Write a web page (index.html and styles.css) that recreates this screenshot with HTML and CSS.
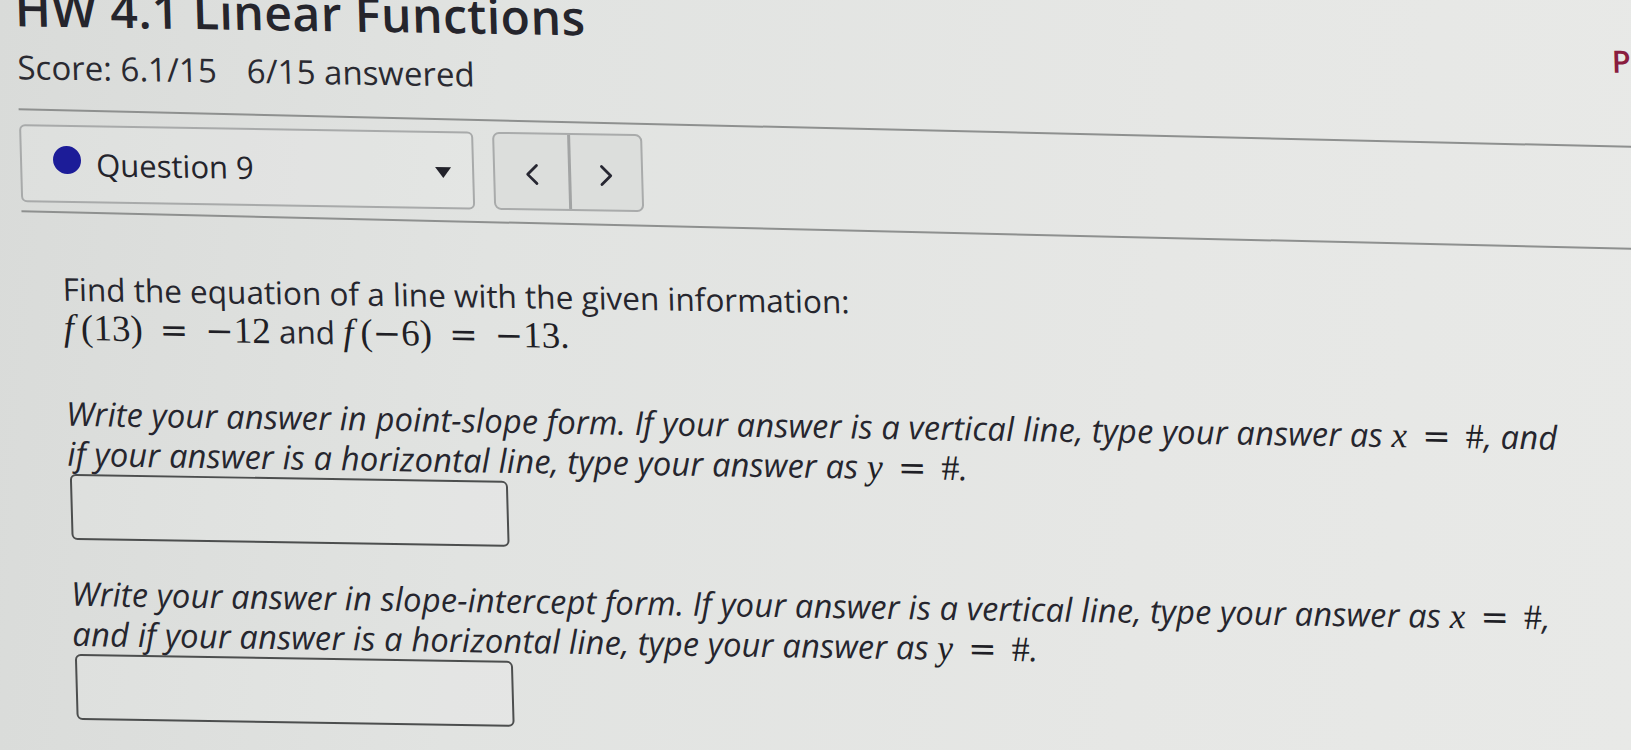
FILE: index.html
```html
<!DOCTYPE html>
<html lang="en">
<head>
<meta charset="utf-8">
<title>HW 4.1 Linear Functions</title>
<link rel="stylesheet" href="styles.css">
</head>
<body>
<div class="page">
  <header class="page-head">
    <div class="head-main">
      <h1 class="title">HW 4.1 Linear Functions</h1>
      <div class="score"><span>Score: 6.1/15</span><span class="answered">6/15 answered</span></div>
    </div>
    <div class="head-side"><span class="points">Points possible: 1</span></div>
  </header>

  <div class="rule"></div>

  <div class="question-row">
    <div class="q-select">
      <span class="status-dot"></span>
      <span class="q-label">Question 9</span>
      <span class="caret"></span>
    </div>
    <div class="qnav">
      <button class="nav-btn prev" aria-label="Previous question">
        <svg width="16" height="24" viewBox="0 0 16 24"><polyline points="12.5,3 3.5,12 12.5,21" fill="none" stroke="#272732" stroke-width="2.8" stroke-linecap="round" stroke-linejoin="round"/></svg>
      </button>
      <button class="nav-btn next" aria-label="Next question">
        <svg width="16" height="24" viewBox="0 0 16 24"><polyline points="3.5,3 12.5,12 3.5,21" fill="none" stroke="#272732" stroke-width="2.8" stroke-linecap="round" stroke-linejoin="round"/></svg>
      </button>
    </div>
  </div>

  <div class="rule"></div>

  <div class="q-body">
    <p class="lead">Find the equation of a line with the given information:<br><span class="m"><i class="fn">f</i>(13)<span class="op rel">=</span><span class="op">−</span>12</span> and <span class="m"><i class="fn">f</i>(<span class="op">−</span>6)<span class="op rel">=</span><span class="op">−</span>13.</span></p>

    <div class="part">
      <p>Write your answer in point-slope form. If your answer is a vertical line, type your answer as <span class="m"><i>x</i><span class="op rel">=</span>#</span>, and if your answer is a horizontal line, type your answer as <span class="m"><i>y</i><span class="op rel">=</span>#</span>.</p>
      <div class="answer"></div>
    </div>

    <div class="part">
      <p>Write your answer in slope-intercept form. If your answer is a vertical line, type your answer as <span class="m"><i>x</i><span class="op rel">=</span>#</span>, and if your answer is a horizontal line, type your answer as <span class="m"><i>y</i><span class="op rel">=</span>#</span>.</p>
      <div class="answer"></div>
    </div>
  </div>
</div>
</body>
</html>
```

FILE: styles.css
```css
html, body {
  margin: 0;
  height: 100%;
  overflow: hidden;
}

body {
  background: linear-gradient(95deg, #d9dbd9 0%, #e1e3e1 30%, #e6e7e5 70%, #e8e9e7 100%);
  font-family: "Open Sans", "Noto Sans", sans-serif;
  color: #26262e;
}

.page {
  width: 1631px;
  box-sizing: border-box;
  padding-left: 15px;
  transform: matrix(1, 0.016, 0.028, 1, 0, 0);
  transform-origin: 0 0;
}

.page-head {
  display: flex;
  margin-top: -20px;
}

.head-main {
  flex: 1;
  min-width: 0;
}

.title {
  margin: 0 0 0 -1px;
  font-size: 48px;
  line-height: 56px;
  font-weight: 600;
  letter-spacing: 0.5px;
  color: #25252c;
}

.score {
  margin-top: 11px;
  font-size: 33px;
  line-height: 40px;
  color: #2a2a31;
}

.score .answered {
  margin-left: 30px;
}

.head-side {
  flex: none;
  width: 21px;
  min-width: 0;
  padding-top: 35px;
  white-space: nowrap;
}

.points {
  font-size: 31px;
  line-height: 40px;
  font-weight: 600;
  color: #8a1d3f;
}

.rule {
  height: 2px;
  background: #8e908f;
  margin-top: 21px;
  transform: skewY(0.42deg);
  transform-origin: 0 0;
}

.question-row {
  display: flex;
  gap: 19px;
  margin-top: 14px;
  margin-bottom: 8px;
}

.question-row + .rule {
  margin-top: 0;
}

.q-select {
  width: 454px;
  height: 78px;
  box-sizing: border-box;
  border: 2px solid #a8aaaa;
  border-radius: 6px;
  background: rgba(255, 255, 255, 0.12);
  display: flex;
  align-items: center;
  padding: 0 21px 0 31px;
}

.status-dot {
  width: 28px;
  height: 28px;
  border-radius: 50%;
  background: #1c1c98;
  margin-right: 15px;
  margin-bottom: 8px;
  flex-shrink: 0;
}

.q-label {
  font-size: 31px;
  line-height: 40px;
  color: #24242c;
}

.caret {
  margin-left: auto;
  margin-top: 4px;
  width: 0;
  height: 0;
  border-left: 8px solid transparent;
  border-right: 8px solid transparent;
  border-top: 11px solid #22222a;
}

.qnav {
  display: flex;
  width: 150px;
  height: 78px;
  box-sizing: border-box;
  border: 2px solid #a9abab;
  border-radius: 7px;
  overflow: hidden;
  background: #dcdedc;
}

.nav-btn {
  border: 0;
  background: transparent;
  padding: 6px 0 0;
  margin: 0;
  display: flex;
  align-items: center;
  justify-content: center;
}

.nav-btn.prev {
  flex: 0 0 73px;
}

.nav-btn.next {
  flex: 1;
  border-left: 3px solid #a2a4a4;
}

.q-body {
  margin-top: 56px;
  padding-left: 39px;
  width: 1510px;
}

.lead {
  margin: 0;
  font-size: 31.5px;
  line-height: 39px;
}

.lead .m {
  font-size: 37px;
}

.lead .rel {
  margin: 0 17px;
}

.lead .m .fn {
  padding-right: 7px;
}

.part {
  margin-top: 47px;
}

.part + .part {
  margin-top: 34px;
}

.part p {
  margin: 0;
  font-size: 33px;
  line-height: 40px;
  font-style: italic;
}

.answer {
  width: 438px;
  height: 66px;
  box-sizing: border-box;
  margin: 0 0 0 2px;
  border: 2px solid #4c4e4e;
  border-radius: 6px;
  background: rgba(255, 255, 255, 0.1);
}

.m {
  font-family: "Liberation Serif", "DejaVu Serif", serif;
  font-size: 36px;
  font-style: normal;
  line-height: 30px;
  color: #1f1f26;
}

.m i {
  font-style: italic;
}

.m .fn {
  padding-right: 5px;
}

.op {
  font-family: "DejaVu Serif", "Liberation Serif", serif;
  font-size: 34px;
}

.rel {
  margin: 0 15px;
}
```
